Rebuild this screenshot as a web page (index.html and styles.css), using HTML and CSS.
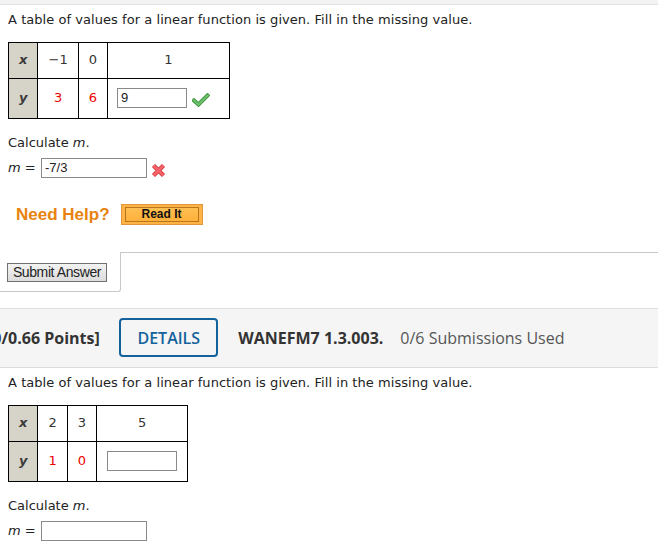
FILE: index.html
```html
<!DOCTYPE html>
<html>
<head>
<meta charset="utf-8">
<link rel="stylesheet" href="styles.css">
</head>
<body>
<div class="topstrip"></div>

<section class="q">
  <p class="prompt">A table of values for a linear function is given. Fill in the missing value.</p>
  <table class="vals t1">
    <tr>
      <th><i>x</i></th>
      <td>&minus;1</td>
      <td>0</td>
      <td>1</td>
    </tr>
    <tr>
      <th><i>y</i></th>
      <td class="red">3</td>
      <td class="red">6</td>
      <td class="ans">
        <div class="cellbox"><span class="field"><span class="ftext">9</span></span><svg class="check" width="18" height="14" viewBox="0 0 18 14"><path d="M2 7.5 L6.5 11.5 L15.5 2.5" fill="none" stroke="#3f8f3f" stroke-width="4" stroke-linecap="square"/><path d="M2 7.5 L6.5 11.5 L15.5 2.5" fill="none" stroke="#6cc46a" stroke-width="2.2" stroke-linecap="square"/></svg></div>
      </td>
    </tr>
  </table>
  <p class="calc">Calculate <i>m</i>.</p>
  <div class="mrow"><span class="mlabel"><i>m</i> =</span><span class="field wide"><span class="ftext">-7/3</span></span><svg class="cross" width="15" height="15" viewBox="0 0 15 15"><path d="M2.5 2.5 L12.5 12.5 M12.5 2.5 L2.5 12.5" stroke="#d23a3a" stroke-width="4.4" stroke-linecap="butt"/><path d="M2.5 2.5 L12.5 12.5 M12.5 2.5 L2.5 12.5" stroke="#f4646a" stroke-width="2.6" stroke-linecap="butt"/></svg></div>
  <div class="help"><span class="needhelp">Need Help?</span><span class="readit"><span class="readit-in">Read It</span></span></div>
</section>

<div class="submitrow">
  <div class="submitcell"><span class="submitbtn">Submit Answer</span></div>
  <div class="submitrest"></div>
</div>

<div class="band">
  <span class="points">[0/0.66 Points]</span>
  <span class="details">DETAILS</span>
  <span class="qid">WANEFM7 1.3.003.</span>
  <span class="subs">0/6 Submissions Used</span>
</div>

<section class="q q2">
  <p class="prompt">A table of values for a linear function is given. Fill in the missing value.</p>
  <table class="vals t2">
    <tr>
      <th><i>x</i></th>
      <td>2</td>
      <td>3</td>
      <td>5</td>
    </tr>
    <tr>
      <th><i>y</i></th>
      <td class="red">1</td>
      <td class="red">0</td>
      <td class="ans2"><div class="cellbox center"><span class="field"></span></div></td>
    </tr>
  </table>
  <p class="calc">Calculate <i>m</i>.</p>
  <div class="mrow"><span class="mlabel"><i>m</i> =</span><span class="field wide"></span></div>
</section>
</body>
</html>
```
FILE: styles.css
```css
html, body {
  margin: 0;
  padding: 0;
  background: #fff;
  overflow: hidden;
}
body {
  font-family: "DejaVu Sans", Verdana, sans-serif;
  font-size: 13px;
  line-height: 16px;
  color: #222;
}
.topstrip {
  height: 4px;
  background: #f3f3f3;
  border-bottom: 1px solid #e2e2e2;
}
.q {
  padding-left: 8px;
}
.prompt {
  margin: 6.5px 0 0 0;
  letter-spacing: 0.05px;
}
.q2 .prompt {
  margin-top: 7px;
}
.vals {
  border-collapse: collapse;
  margin-top: 14px;
}
.vals th, .vals td {
  border: 1px solid #000;
  padding: 9.5px 10px;
  text-align: center;
  color: #333;
  font-weight: normal;
  line-height: 16px;
}
.vals tr:last-child th, .vals tr:last-child td {
  height: 20px;
  padding: 9.5px 10px;
}
.vals th {
  background: #d6d3c9;
  width: 8px;
  font-weight: bold;
}
.vals th i {
  font-style: italic;
  color: #3a3a3a;
}
.vals td.red {
  color: #e00;
}
.t1 tr td.ans {
  text-align: left;
  padding: 9.5px 10px 9.5px 9px;
  width: 102px;
}
.cellbox {
  display: flex;
  align-items: center;
  height: 20px;
}
.cellbox.center {
  justify-content: center;
}
.field {
  display: inline-block;
  box-sizing: border-box;
  width: 70px;
  height: 20px;
  border: 1px solid #8a8a8a;
  background: #fff;
  font-family: "Liberation Sans", Arial, sans-serif;
  font-size: 13px;
  line-height: 18px;
  color: #222;
  padding: 0 3px;
  text-align: left;
}
.field.wide {
  width: 106px;
}
.check {
  display: block;
  margin: 3px 0 0 5px;
}
.calc {
  margin: 16px 0 0 0;
}
.mrow {
  display: flex;
  align-items: center;
  margin-top: 7.5px;
  height: 20px;
}
.mlabel {
  width: 33px;
}
.cross {
  margin-left: 4px;
  margin-top: 5px;
}
.help {
  display: flex;
  align-items: center;
  margin-top: 26px;
  padding-left: 8px;
  height: 21px;
}
.needhelp {
  font-family: "Liberation Sans", Arial, sans-serif;
  font-weight: bold;
  font-size: 17px;
  color: #e8830f;
  margin-right: 11px;
}
.readit {
  display: inline-block;
  box-sizing: border-box;
  width: 82px;
  height: 21px;
  border: 1px solid #e0963a;
  background: #ffb345;
  padding: 2px 3px;
}
.readit-in {
  display: block;
  box-sizing: border-box;
  height: 15px;
  border: 1px solid #b8761f;
  background: linear-gradient(#ffbf52, #ffb03a);
  font-family: "Liberation Sans", Arial, sans-serif;
  font-weight: bold;
  font-size: 12px;
  line-height: 13px;
  text-align: center;
  color: #111;
}
.submitrow {
  display: flex;
  margin-top: 26.5px;
}
.submitcell {
  width: 121px;
  height: 40px;
  box-sizing: border-box;
  border-right: 1px solid #c8c8c8;
  border-bottom: 1px solid #c8c8c8;
  border-bottom-right-radius: 3px;
  padding: 11.5px 0 0 7px;
}
.submitrest {
  flex: 1;
  border-top: 1px solid #c8c8c8;
}
.submitbtn {
  display: inline-block;
  box-sizing: border-box;
  width: 100px;
  height: 19px;
  border: 1px solid #707070;
  background: linear-gradient(#f3f3f3, #dcdcdc);
  font-family: "Liberation Sans", Arial, sans-serif;
  font-size: 14px;
  letter-spacing: -0.4px;
  line-height: 17px;
  text-align: center;
  color: #222;
}
.band {
  margin-top: 16px;
  height: 58px;
  background: #f5f5f5;
  border-top: 1px solid #dcdcdc;
  border-bottom: 1px solid #dcdcdc;
  display: flex;
  align-items: center;
  font-family: "Open Sans", sans-serif;
  font-size: 16px;
  color: #222;
  white-space: nowrap;
}
.points {
  font-weight: bold;
  margin-left: -13px;
  color: #333;
}
.details {
  box-sizing: border-box;
  width: 99px;
  height: 39px;
  margin-left: 19.5px;
  border: 2px solid #14629c;
  border-radius: 4px;
  color: #14629c;
  font-weight: 600;
  display: flex;
  align-items: center;
  justify-content: center;
}
.qid {
  font-weight: bold;
  margin-left: 20px;
  color: #333;
}
.subs {
  margin-left: 17px;
  color: #555;
}
```
